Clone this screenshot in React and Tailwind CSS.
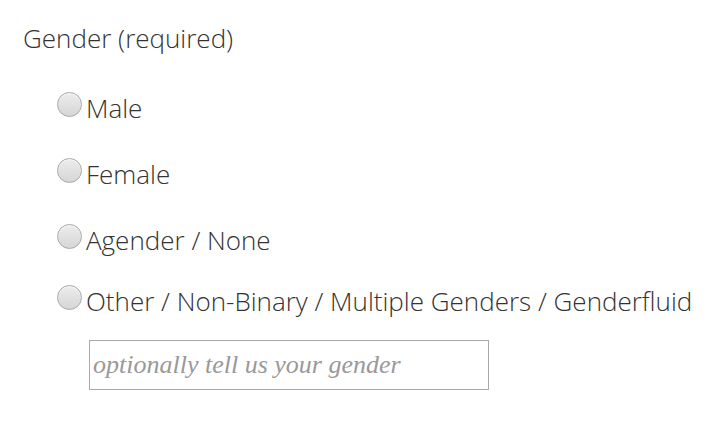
import React from "react";

function Radio() {
  return (
    <span className="block w-[25px] h-[25px] rounded-full border border-[#a8a8a8] bg-[linear-gradient(180deg,#ececec,#d6d6d6)] shadow-[inset_0_1px_1px_rgba(255,255,255,0.8)] shrink-0" />
  );
}

function Option({ label, className }) {
  return (
    <label className={"flex items-start " + className}>
      <span className="block mt-[2px]"><Radio /></span>
      <span className="ml-[4px]">{label}</span>
    </label>
  );
}

export default function App() {
  return (
    <div className="w-[717px] h-[426px] bg-white text-[#333] font-['Open_Sans',sans-serif] font-light text-[26px] leading-[36px]">
      <div className="pl-[23px] pt-[20px]">Gender (required)</div>
      <div className="pl-[57px]">
        <Option label="Male" className="mt-[34px]" />
        <Option label="Female" className="mt-[30px]" />
        <Option label="Agender / None" className="mt-[30px]" />
        <Option label="Other / Non-Binary / Multiple Genders / Genderfluid" className="mt-[25px]" />
        <div className="pl-[32px] mt-[21px]">
          <input
            className="block w-[400px] h-[50px] border border-[#aaa] px-[3px] font-['Liberation_Serif',serif] italic text-[26px] text-[#333] placeholder:text-[#999] outline-none"
            placeholder="optionally tell us your gender"
          />
        </div>
      </div>
    </div>
  );
}
